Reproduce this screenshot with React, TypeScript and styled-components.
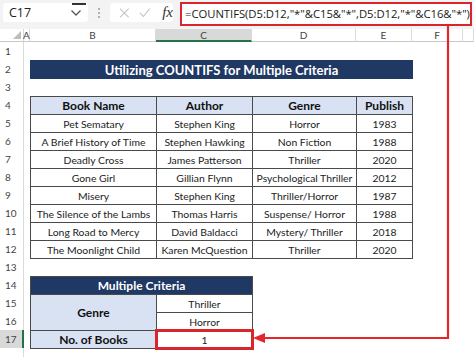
import React from "react";
import styled, { createGlobalStyle, css } from "styled-components";

const GlobalStyle = createGlobalStyle`
    body {
        margin: 0;
        background: #ffffff;
        font-family: "Lato", "Liberation Sans", sans-serif;
    }
`;

type TVariant = "title" | "head" | "body" | "label" | "navy";

const books = [
    ["Pet Sematary", "Stephen King", "Horror", "1983"],
    ["A Brief History of Time", "Stephen Hawking", "Non Fiction", "1988"],
    ["Deadly Cross", "James Patterson", "Thriller", "2020"],
    ["Gone Girl", "Gillian Flynn", "Psychological Thriller", "2012"],
    ["Misery", "Stephen King", "Thriller/Horror", "1987"],
    ["The Silence of the Lambs", "Thomas Harris", "Suspense/ Horror", "1988"],
    ["Long Road to Mercy", "David Baldacci", "Mystery/ Thriller", "2018"],
    ["The Moonlight Child", "Karen McQuestion", "Thriller", "2020"],
];

const letters = ["A", "B", "C", "D", "E", "F", ""];

const App = () => (
    <Page>
        <GlobalStyle />
        <Toolbar>
            <NameBox>
                C17
                <svg width="12" height="8" viewBox="0 0 12 8">
                    <path d="M1.5 1.5 L6 6 L10.5 1.5" fill="none" stroke="#555" strokeWidth="1.3" />
                </svg>
                <NameMark />
            </NameBox>
            <Dots>
                <span />
                <span />
                <span />
            </Dots>
            <FxBox>
                <svg width="12" height="12" viewBox="0 0 12 12">
                    <path d="M1 1 L11 11 M11 1 L1 11" stroke="#c4c4c4" strokeWidth="1.2" />
                </svg>
                <svg width="13" height="11" viewBox="0 0 13 11">
                    <path d="M1 6 L5 10 L12 1" fill="none" stroke="#c4c4c4" strokeWidth="1.2" />
                </svg>
                <FxLabel>fx</FxLabel>
            </FxBox>
            <FormulaBox>=COUNTIFS(D5:D12,"*"&amp;C15&amp;"*",D5:D12,"*"&amp;C16&amp;"*")</FormulaBox>
        </Toolbar>

        <Sheet>
            <Corner>
                <svg width="8" height="8" viewBox="0 0 8 8">
                    <path d="M8 0 L8 8 L0 8 Z" fill="#bdbdbd" />
                </svg>
            </Corner>
            {letters.map((l, i) => (
                <ColHead key={l + i} $col={i + 2} $active={l === "C"}>{l}</ColHead>
            ))}
            {Array.from({ length: 18 }, (_, i) => (
                <RowHead key={i} $row={i + 2} $active={i + 1 === 17}>{i < 17 ? i + 1 : ""}</RowHead>
            ))}

            <Cell $col={3} $row={3} $span={4} $variant="title">Utilizing COUNTIFS for Multiple Criteria</Cell>

            <Cell $col={3} $row={5} $variant="head">Book Name</Cell>
            <Cell $col={4} $row={5} $variant="head">Author</Cell>
            <Cell $col={5} $row={5} $variant="head">Genre</Cell>
            <Cell $col={6} $row={5} $variant="head">Publish</Cell>
            {books.map((b, r) =>
                b.map((v, c) => (
                    <Cell key={`${r}-${c}`} $col={c + 3} $row={r + 6} $variant="body">{v}</Cell>
                ))
            )}

            <Cell $col={3} $row={15} $span={2} $variant="navy">Multiple Criteria</Cell>
            <Cell $col={3} $row={16} $rows={2} $variant="label">Genre</Cell>
            <Cell $col={4} $row={16} $variant="body">Thriller</Cell>
            <Cell $col={4} $row={17} $variant="body">Horror</Cell>
            <Cell $col={3} $row={18} $variant="label">No. of Books</Cell>
            <Cell $col={4} $row={18} $variant="body" $selected>1</Cell>
        </Sheet>

        <Arrow width="474" height="357" viewBox="0 0 474 357">
            <path d="M448 26 L448 338 L262 338" fill="none" stroke="#e3262b" strokeWidth="2.2" />
            <path d="M253 338 L265 333 L265 343 Z" fill="#e3262b" />
        </Arrow>
    </Page>
);

const Page = styled.div`
    position: relative;
    width: 474px;
    height: 357px;
    overflow: hidden;
    background: #ffffff;
`;

const Toolbar = styled.div`
    height: 29px;
    box-sizing: border-box;
    background: #f3f3f3;
    display: flex;
    align-items: center;
    padding: 0 2px 0 3px;
`;

const NameBox = styled.div`
    position: relative;
    width: 85px;
    height: 19px;
    box-sizing: border-box;
    background: #ffffff;
    border-radius: 3px;
    display: flex;
    align-items: center;
    justify-content: space-between;
    padding: 0 6px 0 6px;
    font-family: "Open Sans", "Liberation Sans", sans-serif;
    font-size: 12.5px;
    color: #222;
    margin-top: -4px;
`;

const NameMark = styled.div`
    position: absolute;
    top: 0;
    right: 2px;
    width: 14px;
    height: 1.5px;
    background: #333;
`;

const Dots = styled.div`
    width: 22px;
    display: flex;
    flex-direction: column;
    align-items: center;
    gap: 2px;
    margin-top: -4px;

    span {
        width: 2px;
        height: 2px;
        background: #9a9a9a;
        border-radius: 50%;
    }
`;

const FxBox = styled.div`
    width: 63px;
    height: 19px;
    box-sizing: border-box;
    background: #ffffff;
    border-radius: 3px;
    display: flex;
    align-items: center;
    gap: 9px;
    padding-left: 9px;
    margin-top: -4px;
`;

const FxLabel = styled.span`
    font-family: "Liberation Serif", serif;
    font-style: italic;
    font-size: 15px;
    color: #333;
    margin-left: 3px;
`;

const FormulaBox = styled.div`
    flex: 1;
    margin-left: 7px;
    height: 24px;
    box-sizing: border-box;
    border: 2px solid #d8262b;
    background: #ffffff;
    display: flex;
    align-items: center;
    padding-left: 3px;
    font-family: "Open Sans", "Liberation Sans", sans-serif;
    font-size: 11.3px;
    letter-spacing: -0.05px;
    color: #1a1a1a;
    white-space: nowrap;
    overflow: hidden;
    margin-top: -2px;
`;

const Sheet = styled.div`
    display: grid;
    grid-template-columns: 24px 6px 126px 96px 104px 56px 51px 1fr;
    grid-template-rows: 13px repeat(18, 18px);
    font-family: "Lato", "Liberation Sans", sans-serif;
`;

const Corner = styled.div`
    grid-column: 1;
    grid-row: 1;
    background: #ffffff;
    border-bottom: 1px solid #c8c8c8;
    border-right: 1px solid #d8d8d8;
    display: flex;
    align-items: flex-end;
    justify-content: flex-end;
    padding: 0 2px 2px 0;
`;

const ColHead = styled.div<{ $col: number; $active?: boolean }>`
    grid-column: ${(p) => p.$col};
    grid-row: 1;
    background: ${(p) => (p.$active ? "#d9d9d9" : "#ffffff")};
    border-right: 1px solid #dadada;
    border-bottom: ${(p) => (p.$active ? "2px solid #227447" : "1px solid #c8c8c8")};
    font-size: 10px;
    color: #444;
    display: flex;
    align-items: center;
    justify-content: center;
`;

const RowHead = styled.div<{ $row: number; $active?: boolean }>`
    grid-column: 1;
    grid-row: ${(p) => p.$row};
    background: ${(p) => (p.$active ? "#d9d9d9" : "#ffffff")};
    border-right: ${(p) => (p.$active ? "2px solid #227447" : "1px solid #dadada")};
    font-size: 10px;
    color: #444;
    display: flex;
    align-items: center;
    padding-left: 5px;
`;

const variants = {
    title: css`
        background: #203864;
        color: #ffffff;
        font-weight: 700;
        font-size: 13px;
        border: none;
    `,
    navy: css`
        background: #203864;
        color: #ffffff;
        font-weight: 700;
        font-size: 12px;
    `,
    head: css`
        background: #d9e2f3;
        color: #111;
        font-weight: 700;
        font-size: 12px;
    `,
    label: css`
        background: #d9e2f3;
        color: #111;
        font-weight: 700;
        font-size: 12px;
    `,
    body: css`
        background: #ffffff;
        color: #222;
        font-size: 10.4px;
    `,
};

const Cell = styled.div<{
    $col: number;
    $row: number;
    $span?: number;
    $rows?: number;
    $variant: TVariant;
    $selected?: boolean;
}>`
    grid-column: ${(p) => p.$col} / span ${(p) => p.$span ?? 1};
    grid-row: ${(p) => p.$row} / span ${(p) => p.$rows ?? 1};
    border: 1px solid #4a4a4a;
    margin: 0 -1px -1px 0;
    display: flex;
    align-items: center;
    justify-content: center;
    white-space: nowrap;
    ${(p) => variants[p.$variant]}
    ${(p) =>
        p.$selected &&
        css`
            position: relative;
            z-index: 1;
            outline: 3px solid #d8262b;
            outline-offset: -2px;
        `}
`;

const Arrow = styled.svg`
    position: absolute;
    left: 0;
    top: 0;
    pointer-events: none;
    z-index: 2;
`;

export default App;
